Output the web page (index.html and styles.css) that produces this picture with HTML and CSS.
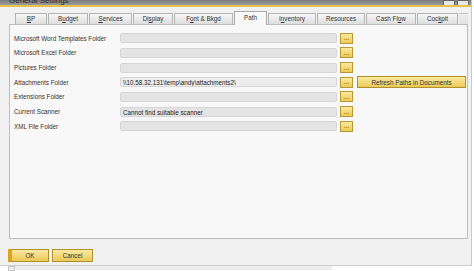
FILE: index.html
```html
<!DOCTYPE html>
<html lang="en">
<head>
    <meta charset="UTF-8">
    <title>General Settings</title>
    <link rel="stylesheet" href="styles.css">
</head>
<body>
<div class="window">
    <div class="titlebar">
        <span class="title">General Settings</span>
        <div class="win-buttons">
            <span class="win-btn"></span>
            <span class="win-btn"></span>
        </div>
    </div>
    <div class="accent"></div>

    <div class="tabs">
        <div class="tab"><u>B</u>P</div>
        <div class="tab">B<u>u</u>dget</div>
        <div class="tab"><u>S</u>ervices</div>
        <div class="tab">Di<u>s</u>play</div>
        <div class="tab">F<u>o</u>nt &amp; Bkgd</div>
        <div class="tab active">Path</div>
        <div class="tab">I<u>n</u>ventory</div>
        <div class="tab">Resources</div>
        <div class="tab">Cash Fl<u>o</u>w</div>
        <div class="tab">Coc<u>k</u>pit</div>
        <div class="tab-rest"></div>
    </div>

    <div class="panel">
        <div class="row">
            <label>Microsoft Word Templates Folder</label>
            <div class="field"></div>
            <button class="browse">...</button>
        </div>
        <div class="row">
            <label>Microsoft Excel Folder</label>
            <div class="field"></div>
            <button class="browse">...</button>
        </div>
        <div class="row">
            <label>Pictures Folder</label>
            <div class="field"></div>
            <button class="browse">...</button>
        </div>
        <div class="row">
            <label>Attachments Folder</label>
            <div class="field filled">\\10.58.32.131\temp\andy\attachments2\</div>
            <button class="browse">...</button>
            <button class="btn refresh">Refresh Paths in Documents</button>
        </div>
        <div class="row">
            <label>Extensions Folder</label>
            <div class="field"></div>
            <button class="browse">...</button>
        </div>
        <div class="row">
            <label>Current Scanner</label>
            <div class="field">Cannot find suitable scanner</div>
            <button class="browse">...</button>
        </div>
        <div class="row">
            <label>XML File Folder</label>
            <div class="field"></div>
            <button class="browse">...</button>
        </div>
    </div>

    <div class="footer">
        <button class="btn ok">OK</button>
        <button class="btn">Cancel</button>
    </div>

    <div class="statusbar">
        <span class="status-box"></span>
        <span class="status-line"></span>
    </div>
</div>
</body>
</html>
```

FILE: styles.css
```css
* {
    box-sizing: border-box;
}

body {
    margin: 0;
    width: 474px;
    height: 271px;
    overflow: hidden;
    background: #fff;
    font-family: 'Liberation Sans', Arial, sans-serif;
    font-size: 6.3px;
    color: #333;
}

.window {
    width: 472px;
    height: 271px;
    background: #f1f1f1;
    border-right: 1px solid #c9c9c9;
    display: flex;
    flex-direction: column;
}

/* title bar, mostly cut off at the top */
.titlebar {
    height: 5px;
    overflow: hidden;
    background: linear-gradient(#7c7c7c, #9a9a9a);
    display: flex;
    justify-content: space-between;
    padding-left: 9px;
}

.title {
    font-size: 8px;
    line-height: 8px;
    margin-top: -3px;
    color: #2b2b2b;
}

.win-buttons {
    display: flex;
    gap: 2px;
    padding-right: 2px;
}

.win-btn {
    width: 12px;
    height: 6px;
    background: #e8e8e8;
    border: 1px solid #666;
}

.accent {
    height: 2px;
    background: #e9c24a;
}

/* tab strip */
.tabs {
    display: flex;
    align-items: flex-end;
    height: 17px;
    padding-left: 15px;
    margin-right: 3px;
}

.tab {
    height: 11px;
    line-height: 10px;
    border: 1px solid #b4b4b4;
    border-bottom: none;
    background: linear-gradient(#f6f6f6, #dedede);
    text-align: center;
    margin-right: 1px;
    flex: none;
}

.tab u {
    text-decoration: underline;
}

.tab:nth-child(1) { width: 32px; }
.tab:nth-child(2) { width: 40px; }
.tab:nth-child(3) { width: 43px; }
.tab:nth-child(4) { width: 40px; }
.tab:nth-child(5) { width: 59px; }
.tab:nth-child(6) { width: 33px; }
.tab:nth-child(7) { width: 48px; }
.tab:nth-child(8) { width: 48px; }
.tab:nth-child(9) { width: 50px; }
.tab:nth-child(10) { width: 41px; }

.tab.active {
    height: 14px;
    line-height: 12px;
    background: #f8f8f8;
    border-color: #aaa;
    position: relative;
    z-index: 1;
    margin-bottom: -1px;
}

.tab-rest {
    flex: 1;
    height: 11px;
    border-top: 1px solid #c4c4c4;
    background: linear-gradient(#eeeeee, #e2e2e2);
}

/* content panel */
.panel {
    height: 217px;
    margin: 0 3px 0 9px;
    border: 1px solid #bdbdbd;
    background: #f8f8f8;
    padding: 6px 0 0 4px;
}

.row {
    display: flex;
    align-items: center;
    height: 14.7px;
}

.row label {
    width: 106px;
    flex: none;
}

.field {
    width: 217px;
    height: 10px;
    line-height: 9px;
    padding-left: 2px;
    background: #e4e4e4;
    border: 1px solid #d6d6d6;
    border-radius: 2px;
    color: #222;
    white-space: nowrap;
    overflow: hidden;
}

.field.filled {
    background: #ececec;
}

.browse {
    margin-left: 3px;
    width: 13px;
    height: 11px;
    padding: 0;
    border: 1px solid #b79834;
    background: linear-gradient(#fbe9a0, #eccb55);
    font-family: 'Liberation Sans', Arial, sans-serif;
    font-size: 7px;
    line-height: 6px;
    font-weight: bold;
    color: #c08a1a;
}

.btn {
    height: 12px;
    padding: 0;
    border: 1px solid #b1912c;
    background: linear-gradient(#fbeaa4, #ebc954);
    font-family: 'Liberation Sans', Arial, sans-serif;
    font-size: 6.3px;
    color: #333;
}

.refresh {
    margin-left: 4px;
    width: 109px;
}

/* footer buttons */
.footer {
    display: flex;
    gap: 3px;
    padding: 10px 0 0 8px;
    height: 26px;
}

.footer .btn {
    width: 41px;
    height: 13px;
}

.btn.ok {
    border-left: 4px solid #e0a21e;
}

/* status strip */
.statusbar {
    flex: 1;
    display: flex;
    align-items: flex-start;
    border-top: 1px solid #cfcfcf;
    margin-right: -1px;
    background: #fff;
}

.status-box {
    width: 7px;
    height: 5px;
    margin-left: 8px;
    border: 1px solid #c8c8c8;
    background: #eee;
}

.status-line {
    width: 317px;
    height: 4px;
    background: #ececec;
}
```
